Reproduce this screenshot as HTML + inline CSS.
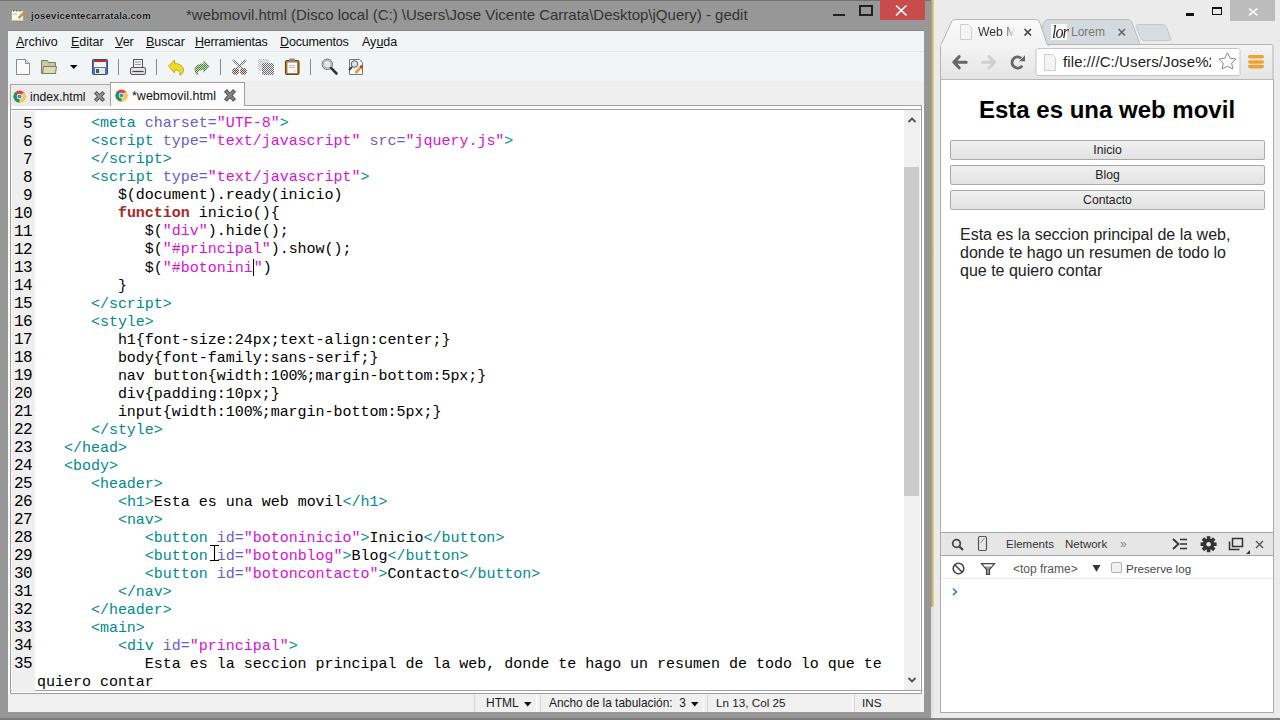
<!DOCTYPE html>
<html><head><meta charset="utf-8">
<style>
*{margin:0;padding:0;box-sizing:border-box}
html,body{width:1280px;height:720px;overflow:hidden;background:#858585;font-family:"Liberation Sans",sans-serif}
.a{position:absolute}
svg{position:absolute;overflow:visible}
#gedit{left:0;top:0;width:932px;height:718px;background:#979797}
#menubar{left:8px;top:31px;width:916px;height:21px;background:#f2f5f5;border-bottom:1px solid #e3e7e7;font-size:12.5px;color:#111}
#menubar span{position:absolute;top:4px}
#toolbar{left:8px;top:52px;width:916px;height:29px;background:#f2f5f5}
#tabbar{left:8px;top:81px;width:916px;height:25px;background:#efefef}
#page{left:8px;top:105px;width:916px;height:589px;background:#fff}
#pageb{left:10px;top:105px;width:912px;height:589px;border:1px solid #a0a0a0}
#editor{left:10px;top:109px;width:912px;height:582px;background:#fff;border:1px solid #a0a0a0}
#gutter{left:1px;top:1px;width:23px;height:581px;background:#efefef}
#code{left:26px;top:5px;font-family:"Liberation Mono",monospace;font-size:15px;letter-spacing:-0.015px;line-height:18px;color:#000;white-space:pre}
.ln{position:absolute;left:-1px;width:22px;text-align:right;font-family:"Liberation Mono",monospace;font-size:16px;letter-spacing:-0.6px;line-height:18px;color:#000}
.t{color:#008a8c}.at{color:#6a5acd}.s{color:#d810d8}.k{color:#a52a2a;font-weight:bold}
.cur{display:inline-block;width:0;height:17px;border-left:1px solid #000;vertical-align:-4.5px;margin-right:0}
#status{left:8px;top:694px;width:916px;height:18px;background:#f0f0f0;font-size:11.7px;color:#1a1a1a}
#status .seg{position:absolute;top:1px;height:17px;border-left:1px solid #d6d6d6;border-right:1px solid #fbfbfb}
#chrome{left:934px;top:0;width:346px;height:718px;background:#ebebeb}
.btn{width:315px;height:20px;background:linear-gradient(#f0f0f0,#e2e2e2);border:1px solid #a9a9a9;border-radius:2px;text-align:center;font-size:12.2px;line-height:18px;color:#222}
</style></head><body>
<div id="gedit" class="a">
  <div class="a" style="left:0;top:0;width:932px;height:1px;background:#727272"></div><div class="a" style="left:8px;top:30px;width:916px;height:1px;background:#878787"></div>
  <!-- title -->
  <svg style="left:0;top:0" width="30" height="30" viewBox="0 0 30 30">
    <rect x="11.5" y="10.5" width="12" height="10.5" fill="#fbfaf4" stroke="#8a8070" stroke-width="0.6"/>
    <rect x="11.5" y="19.8" width="12" height="1.2" fill="#d8c8a0"/>
    <path d="M13 11h1.2M16.3 11h1.2M19.6 11h1.2" stroke="#333" stroke-width="1.2"/>
    <path d="M13.2 14h4" stroke="#aaa" stroke-width="1"/>
    <path d="M18.6 18.2l6.6-6.6" stroke="#d08a3a" stroke-width="2.4"/>
  </svg>
  <div class="a" style="left:31px;top:9.5px;font-size:9.6px;color:#111;font-weight:bold;letter-spacing:0.22px;text-shadow:0 0 1.5px rgba(255,255,255,.8)">josevicentecarratala.com</div>
  <div class="a" style="left:186px;top:6px;font-size:15px;color:#333">*webmovil.html (Disco local (C:) \Users\Jose Vicente Carrata\Desktop\jQuery) - gedit</div>
  <div class="a" style="left:833px;top:13.5px;width:12px;height:2.2px;background:#222"></div>
  <div class="a" style="left:859px;top:5px;width:14px;height:11px;border:2px solid #222"></div>
  <div class="a" style="left:880px;top:0;width:45px;height:20px;background:#c74c4b"></div>
  <svg style="left:895px;top:5px" width="13" height="11" viewBox="0 0 13 11"><path d="M1 .5L11.5 10.3M11.5 .5L1 10.3" stroke="#fff" stroke-width="1.6"/></svg>

  <div id="menubar" class="a">
    <span style="left:8px"><u>A</u>rchivo</span>
    <span style="left:63px"><u>E</u>ditar</span>
    <span style="left:107px"><u>V</u>er</span>
    <span style="left:138px"><u>B</u>uscar</span>
    <span style="left:187px;letter-spacing:-0.2px"><u>H</u>erramientas</span>
    <span style="left:272px;letter-spacing:-0.15px"><u>D</u>ocumentos</span>
    <span style="left:354px">Ay<u>u</u>da</span>
  </div>
  <div id="toolbar" class="a"></div>
  <!-- toolbar icons (absolute to page) -->
  <svg style="left:0;top:0" width="400" height="90" viewBox="0 0 400 90">
    <!-- new -->
    <path d="M16.5 59.5h9l4 4v11h-13z" fill="#fafafa" stroke="#8a8a8a"/>
    <path d="M25.5 59.5v4h4" fill="#e0e0e0" stroke="#8a8a8a"/>
    <!-- open folder -->
    <path d="M41.5 73.5v-13h6l1 2h7v11z" fill="#c6c8a4" stroke="#7c7e60"/>
    <path d="M42.5 73.5l1-7h13l-1 7z" fill="#dadcb8" stroke="#7c7e60"/>
    <!-- dropdown -->
    <path d="M70 65h7.5l-3.75 4z" fill="#000"/>
    <!-- save -->
    <rect x="92.5" y="59.5" width="15" height="15" rx="1" fill="#4f78b8" stroke="#2c4c88"/>
    <rect x="94" y="60" width="12" height="2" fill="#d42020"/>
    <rect x="94" y="62" width="12" height="5" fill="#f4f4f4"/>
    <rect x="95" y="68" width="10" height="6" fill="#e6e6e6"/>
    <rect x="96" y="69" width="3" height="4" fill="#555"/>
    <!-- separators -->
    <rect x="118" y="59" width="1" height="16" fill="#8a8a8a"/>
    <rect x="156" y="59" width="1" height="16" fill="#8a8a8a"/>
    <rect x="220" y="59" width="1" height="16" fill="#8a8a8a"/>
    <rect x="310" y="59" width="1" height="16" fill="#8a8a8a"/>
    <!-- print -->
    <rect x="133.5" y="59.5" width="9" height="8" fill="#f4f4f4" stroke="#555"/>
    <path d="M135 62h6M135 64.5h6" stroke="#999"/>
    <rect x="130.5" y="67.5" width="15" height="7" rx="1.5" fill="#e4e4e4" stroke="#555"/>
    <path d="M132.5 71.5h11" stroke="#444" stroke-width="1.2"/>
    <!-- undo -->
    <path d="M168.5 66l6-6v3.5c5 0 9 2.5 9 6.5 0 3-2 5-4 5 1-2 1-5-5-5v3z" fill="#f0da28" stroke="#b8a010" stroke-width="0.9"/>
    <!-- redo -->
    <defs>
      <pattern id="dg" width="2" height="2" patternUnits="userSpaceOnUse"><rect width="2" height="2" fill="#c4dcb4"/><rect width="1" height="1" fill="#5a7a4a"/><rect x="1" y="1" width="1" height="1" fill="#5a7a4a"/></pattern>
      <pattern id="dc" width="2" height="2" patternUnits="userSpaceOnUse"><rect width="2" height="2" fill="#e8e0d0"/><rect width="1" height="1" fill="#5a4a3a"/><rect x="1" y="1" width="1" height="1" fill="#5a4a3a"/></pattern>
      <pattern id="dk" width="2" height="2" patternUnits="userSpaceOnUse"><rect width="2" height="2" fill="#f0f0f0"/><rect width="1" height="1" fill="#666"/><rect x="1" y="1" width="1" height="1" fill="#666"/></pattern>
      <pattern id="dl" width="2" height="2" patternUnits="userSpaceOnUse"><rect width="2" height="2" fill="#f4f4f4"/><rect width="1" height="1" fill="#bbb"/><rect x="1" y="1" width="1" height="1" fill="#bbb"/></pattern>
    </defs>
    <path d="M209.5 66l-6-6v3.5c-5 0-9 2.5-9 6.5 0 3 2 5 4 5-1-2-1-5 5-5v3z" fill="url(#dg)"/>
    <!-- cut -->
    <path d="M233 60l11 10M246 60l-11 10" stroke="url(#dk)" stroke-width="2.2"/>
    <circle cx="235.5" cy="71.3" r="3.4" fill="url(#dc)"/>
    <circle cx="243.5" cy="71.3" r="3.4" fill="url(#dc)"/>
    <!-- copy -->
    <rect x="258" y="59" width="11" height="12" rx="1" fill="url(#dl)"/>
    <rect x="262" y="63" width="12" height="12" rx="2" fill="url(#dk)"/>
    <!-- paste -->
    <rect x="285.5" y="60.5" width="13.5" height="14" rx="1.5" fill="#a8843a" stroke="#6a4a14" stroke-width="1.2"/>
    <rect x="287.5" y="62.5" width="9.5" height="10.5" fill="#fbfbfb"/>
    <path d="M294 73v-3.5h3z" fill="#ddd"/>
    <rect x="289" y="58.5" width="6" height="3" rx="1" fill="#888"/>
    <path d="M289 65.5h6M289 67.5h6" stroke="#bbb"/>
    <!-- find -->
    <circle cx="327.3" cy="64.3" r="5.2" fill="#e2e6ea" stroke="#666" stroke-width="1"/>
    <circle cx="327.3" cy="64.3" r="3.9" fill="none" stroke="#999" stroke-width="0.8"/>
    <path d="M331.2 68.2l5.3 5.3" stroke="#333" stroke-width="2.6" stroke-linecap="round"/>
    <!-- replace -->
    <path d="M349.5 59.5h10l3 3v12h-13z" fill="#fafafa" stroke="#777"/>
    <circle cx="354.5" cy="64" r="3.3" fill="#dde2e6" stroke="#555"/>
    <path d="M352 67l-3 3" stroke="#333" stroke-width="1.8"/>
    <path d="M355.5 73l6-6.5" stroke="#d8a040" stroke-width="2.6"/>
    <path d="M360.5 67.5l1.5-1.5" stroke="#c02020" stroke-width="2.6"/>
  </svg>

  <div id="tabbar" class="a"></div>
  <div id="page" class="a"></div><div id="pageb" class="a"></div>
  <div class="a" style="left:10px;top:84px;width:101px;height:22px;background:#ebebeb;border:1px solid #a8a8a8;border-bottom:none"></div>
  <div class="a" style="left:30px;top:90px;font-size:12.2px;color:#111">index.html</div>
  <div class="a" style="left:110px;top:82px;width:135px;height:24px;background:#fbfbfb;border:1px solid #a0a0a0;border-bottom:none"></div>
  <div class="a" style="left:132px;top:89px;font-size:12.5px;color:#111">*webmovil.html</div>
  <!-- chrome favicons -->
  <svg style="left:13px;top:90px" width="13" height="13" viewBox="0 0 24 24">
    <circle cx="12" cy="12" r="11" fill="#db4437"/>
    <path d="M12 12L2.5 17.5A11 11 0 0 0 12 23z" fill="#0f9d58"/><path d="M12 12L12 23A11 11 0 0 0 21.5 17.5z" fill="#ffcd40"/>
    <path d="M12 12L2.5 17.5A11 11 0 0 1 1 12 11 11 0 0 1 4.2 4.3z" fill="#0f9d58"/>
    <path d="M12 12L21.5 17.5A11 11 0 0 0 23 12 11 11 0 0 0 19.8 4.3z" fill="#ffcd40"/>
    <circle cx="12" cy="12" r="5" fill="#fff"/><circle cx="12" cy="12" r="3.8" fill="#4285f4"/>
  </svg>
  <svg style="left:115px;top:89px" width="13" height="13" viewBox="0 0 24 24">
    <circle cx="12" cy="12" r="11" fill="#db4437"/>
    <path d="M12 12L2.5 17.5A11 11 0 0 0 12 23z" fill="#0f9d58"/><path d="M12 12L12 23A11 11 0 0 0 21.5 17.5z" fill="#ffcd40"/>
    <path d="M12 12L2.5 17.5A11 11 0 0 1 1 12 11 11 0 0 1 4.2 4.3z" fill="#0f9d58"/>
    <path d="M12 12L21.5 17.5A11 11 0 0 0 23 12 11 11 0 0 0 19.8 4.3z" fill="#ffcd40"/>
    <circle cx="12" cy="12" r="5" fill="#fff"/><circle cx="12" cy="12" r="3.8" fill="#4285f4"/>
  </svg>
  <svg style="left:95px;top:92px" width="9" height="9" viewBox="0 0 9 9"><path d="M1.6 1.6l5.8 5.8M7.4 1.6l-5.8 5.8" stroke="#5a5a5a" stroke-width="3.8" stroke-linecap="square"/><path d="M1.6 1.6l5.8 5.8M7.4 1.6l-5.8 5.8" stroke="#9a9a9a" stroke-width="1.6" stroke-linecap="square"/></svg>
  <svg style="left:225px;top:90px" width="10" height="11" viewBox="0 0 10 11"><path d="M1.8 1.8l6.4 7.2M8.2 1.8l-6.4 7.2" stroke="#555" stroke-width="4" stroke-linecap="square"/><path d="M1.8 1.8l6.4 7.2M8.2 1.8l-6.4 7.2" stroke="#8a8a8a" stroke-width="1.8" stroke-linecap="square"/></svg>

  <div id="editor" class="a">
    <div id="gutter" class="a"></div>
    <div id="lns" class="a" style="left:0;top:5px"><div class="ln" style="top:0px">5</div><div class="ln" style="top:18px">6</div><div class="ln" style="top:36px">7</div><div class="ln" style="top:54px">8</div><div class="ln" style="top:72px">9</div><div class="ln" style="top:90px">10</div><div class="ln" style="top:108px">11</div><div class="ln" style="top:126px">12</div><div class="ln" style="top:144px">13</div><div class="ln" style="top:162px">14</div><div class="ln" style="top:180px">15</div><div class="ln" style="top:198px">16</div><div class="ln" style="top:216px">17</div><div class="ln" style="top:234px">18</div><div class="ln" style="top:252px">19</div><div class="ln" style="top:270px">20</div><div class="ln" style="top:288px">21</div><div class="ln" style="top:306px">22</div><div class="ln" style="top:324px">23</div><div class="ln" style="top:342px">24</div><div class="ln" style="top:360px">25</div><div class="ln" style="top:378px">26</div><div class="ln" style="top:396px">27</div><div class="ln" style="top:414px">28</div><div class="ln" style="top:432px">29</div><div class="ln" style="top:450px">30</div><div class="ln" style="top:468px">31</div><div class="ln" style="top:486px">32</div><div class="ln" style="top:504px">33</div><div class="ln" style="top:522px">34</div><div class="ln" style="top:540px">35</div></div>
    <div id="code" class="a">      <span class="t">&lt;meta</span> <span class="at">charset=</span><span class="s">"UTF-8"</span><span class="t">&gt;</span>
      <span class="t">&lt;script</span> <span class="at">type=</span><span class="s">"text/javascript"</span> <span class="at">src=</span><span class="s">"jquery.js"</span><span class="t">&gt;</span>
      <span class="t">&lt;/script</span><span class="t">&gt;</span>
      <span class="t">&lt;script</span> <span class="at">type=</span><span class="s">"text/javascript"</span><span class="t">&gt;</span>
         $(document).ready(inicio)
         <span class="k">function</span> inicio(){
            $(<span class="s">"div"</span>).hide();
            $(<span class="s">"#principal"</span>).show();
            $(<span class="s">"#botonini<span class="cur"></span>"</span>)
         }
      <span class="t">&lt;/script</span><span class="t">&gt;</span>
      <span class="t">&lt;style</span><span class="t">&gt;</span>
         h1{font-size:24px;text-align:center;}
         body{font-family:sans-serif;}
         nav button{width:100%;margin-bottom:5px;}
         div{padding:10px;}
         input{width:100%;margin-bottom:5px;}
      <span class="t">&lt;/style</span><span class="t">&gt;</span>
   <span class="t">&lt;/head</span><span class="t">&gt;</span>
   <span class="t">&lt;body</span><span class="t">&gt;</span>
      <span class="t">&lt;header</span><span class="t">&gt;</span>
         <span class="t">&lt;h1</span><span class="t">&gt;</span>Esta es una web movil<span class="t">&lt;/h1</span><span class="t">&gt;</span>
         <span class="t">&lt;nav</span><span class="t">&gt;</span>
            <span class="t">&lt;button</span> <span class="at">id=</span><span class="s">"botoninicio"</span><span class="t">&gt;</span>Inicio<span class="t">&lt;/button</span><span class="t">&gt;</span>
            <span class="t">&lt;button</span> <span class="at">id=</span><span class="s">"botonblog"</span><span class="t">&gt;</span>Blog<span class="t">&lt;/button</span><span class="t">&gt;</span>
            <span class="t">&lt;button</span> <span class="at">id=</span><span class="s">"botoncontacto"</span><span class="t">&gt;</span>Contacto<span class="t">&lt;/button</span><span class="t">&gt;</span>
         <span class="t">&lt;/nav</span><span class="t">&gt;</span>
      <span class="t">&lt;/header</span><span class="t">&gt;</span>
      <span class="t">&lt;main</span><span class="t">&gt;</span>
         <span class="t">&lt;div</span> <span class="at">id=</span><span class="s">"principal"</span><span class="t">&gt;</span>
            Esta es la seccion principal de la web, donde te hago un resumen de todo lo que te
quiero contar</div>
    <!-- scrollbar -->
    <div class="a" style="left:893px;top:0;width:16px;height:580px;background:#f0f0f0"></div>
    <div class="a" style="left:893px;top:57px;width:15px;height:329px;background:#cbcbcb"></div>
    <svg style="left:896px;top:7px" width="10" height="6" viewBox="0 0 10 6"><path d="M1.5 5L5 1.5 8.5 5" fill="none" stroke="#505050" stroke-width="1.8"/></svg>
    <svg style="left:896px;top:567px" width="10" height="6" viewBox="0 0 10 6"><path d="M1.5 1L5 4.5 8.5 1" fill="none" stroke="#505050" stroke-width="1.8"/></svg>
  </div>
  <!-- mouse I-beam -->
  <svg style="left:0;top:0" width="230" height="570" viewBox="0 0 230 570"><path d="M210 545.5h9M214.5 545.5v15M210 560.5h9" fill="none" stroke="#000" stroke-width="1.1"/></svg>

  <div id="status" class="a">
    <div class="seg" style="left:466px;width:63px"></div>
    <div class="seg" style="left:532px;width:164px"></div>
    <div class="seg" style="left:699px;width:146px"></div>
    <div class="seg" style="left:846px;width:68px"></div>
    <div class="a" style="left:478px;top:2px;font-size:12px">HTML</div>
    <svg style="left:516px;top:8px" width="8" height="5" viewBox="0 0 8 5"><path d="M0 0h7.5L3.75 4.5z" fill="#111"/></svg>
    <div class="a" style="left:541px;top:2px;font-size:11.9px">Ancho de la tabulación:&nbsp; 3</div>
    <svg style="left:683px;top:8px" width="8" height="5" viewBox="0 0 8 5"><path d="M0 0h7.5L3.75 4.5z" fill="#111"/></svg>
    <div class="a" style="left:708px;top:2px">Ln 13, Col 25</div>
    <div class="a" style="left:854px;top:2px">INS</div>
  </div>
  <div class="a" style="left:0;top:718px;width:932px;height:2px;background:#7c7c7c"></div>
</div>
<div class="a" style="left:931px;top:0;width:3px;height:718px;background:#e4e4e4"></div><div class="a" style="left:931px;top:0;width:3px;height:607px;background:linear-gradient(90deg,#b09a58,#e2d49a)"></div>
<div id="chrome" class="a">
  <!-- window buttons -->
  <div class="a" style="left:252px;top:12.5px;width:8px;height:3px;background:#111"></div>
  <div class="a" style="left:278px;top:7px;width:10px;height:8px;border:1.4px solid #111;border-top-width:2px"></div>
  <div class="a" style="left:296px;top:0;width:45px;height:21px;background:#bcbcbc"></div>
  <svg style="left:314px;top:8px" width="10" height="8" viewBox="0 0 10 8"><path d="M1 .5l8.4 6.8M9.4 .5L1 7.3" stroke="#fff" stroke-width="1.5"/></svg>
  <!-- tabs -->
  <svg style="left:0;top:0" width="346" height="90" viewBox="934 0 346 90">
    <defs>
      <linearGradient id="tg" x1="0" y1="0" x2="0" y2="1"><stop offset="0" stop-color="#fbfbfb"/><stop offset="1" stop-color="#f2f2f2"/></linearGradient>
      <linearGradient id="bg2" x1="0" y1="0" x2="0" y2="1"><stop offset="0" stop-color="#f4f4f4"/><stop offset="1" stop-color="#e4e4e4"/></linearGradient>
    </defs>
    <!-- new tab button -->
    <path d="M1138.5 24.5h24c2 0 3 1 4 3l4 10c1 2 0 3-2 3h-24c-2 0-3-1-4-3l-4-10c-1-2 0-3 2-3z" fill="#d7dce1" stroke="#c4c8cc"/>
    <!-- inactive tab -->
    <path d="M1036 44.5l8-22c1-2 2-3 4-3h80c2 0 3 1 4 3l8 22z" fill="#d5dadf" stroke="#b9bdc2"/>
    <!-- toolbar -->
    <path d="M940.5 80V48c0-2 1-3.5 3-3.5h328c1 0 1.5 .5 1.5 1.5V80" fill="url(#bg2)" stroke="#b5b5b5"/>
    <!-- active tab -->
    <path d="M940.5 46l11-24c1-2 2-2.5 4-2.5h80c2 0 3 .5 4 2.5l8 23h2" fill="url(#tg)" stroke="#b5b5b5"/>
    <rect x="941" y="44" width="106" height="3" fill="#f3f3f3"/>
    <!-- doc icon in tab -->
    <path d="M960.5 24.5h8l3 3v12h-11z" fill="#f4f4f4" stroke="#cfcfcf"/>
    <path d="M1036 50.5c0-1 1-2 2-2h200c1 0 2 1 2 2v23c0 1-1 2-2 2h-200c-1 0-2-1-2-2z" fill="#fff" stroke="#c4c4c4"/>
    <path d="M1044.5 54.5h8l3 3v13h-11z" fill="#f4f4f4" stroke="#cfcfcf"/>
    <!-- close x tabs -->
    <path d="M1024.5 29l6.5 6.5M1031 29l-6.5 6.5" stroke="#444" stroke-width="1.7"/>
    <path d="M1118.5 29l6.5 6.5M1125 29l-6.5 6.5" stroke="#6a6a6a" stroke-width="1.7"/>
    <!-- lor favicon -->
    <rect x="1051" y="24" width="16" height="16" fill="#fff"/>
    <!-- back / fwd / reload -->
    <path d="M954 62.2h12.2M953.8 62.2l5.4-5.6M953.8 62.2l5.4 5.6" stroke="#666" stroke-width="3" stroke-linecap="round" stroke-linejoin="round" fill="none"/>
    <path d="M982.6 62.2h12M994.6 62.2l-5.4-5.6M994.6 62.2l-5.4 5.6" stroke="#d0d0d0" stroke-width="3" stroke-linecap="round" stroke-linejoin="round" fill="none"/>
    <path d="M1022.2 65.7A5.6 5.6 0 1 1 1021.2 58.2" stroke="#666" stroke-width="2.8" fill="none"/>
    <path d="M1019 61.2h6v-6z" fill="#666"/>
    <!-- star -->
    <path d="M1227.5 52.8l2.6 5.4 5.9.8-4.3 4.1 1.1 5.9-5.3-2.8-5.3 2.8 1.1-5.9-4.3-4.1 5.9-.8z" fill="#fff" stroke="#8a8a8a" stroke-width="1"/>
    <!-- menu -->
    <rect x="1248" y="55" width="16" height="3.6" rx="1.8" fill="#eea232"/>
    <rect x="1248" y="60.2" width="16" height="3.6" rx="1.8" fill="#eea232"/>
    <rect x="1248" y="64.8" width="16" height="3.6" rx="1.8" fill="#eea232"/>
  </svg>
  <div class="a" style="left:44px;top:25px;font-size:12.2px;color:#333;width:37px;overflow:hidden;white-space:nowrap;-webkit-mask-image:linear-gradient(90deg,#000 70%,transparent)">Web Movil</div>
  <div class="a" style="left:118px;top:20.5px;font-family:'Liberation Serif',serif;font-style:italic;font-size:19px;color:#2a2a2a;letter-spacing:-1.2px;transform:scaleX(0.85);transform-origin:0 0">lor</div>
  <div class="a" style="left:137px;top:25px;font-size:12px;color:#777">Lorem</div>
  <div class="a" style="left:129px;top:53px;font-size:15px;letter-spacing:0.1px;color:#222;width:148px;overflow:hidden;white-space:nowrap">file:///C:/Users/Jose%20Vicente</div>
  <!-- page -->
  <div class="a" style="left:6px;top:79px;width:334px;height:634px;background:#fff;border:1px solid #ababab;border-top-color:#b8b8b8"></div>
  <div class="a" style="left:7px;top:96px;width:332px;text-align:center;font-size:24px;font-weight:bold;color:#000">Esta es una web movil</div>
  <div class="a btn" style="left:16px;top:140px">Inicio</div>
  <div class="a btn" style="left:16px;top:165px">Blog</div>
  <div class="a btn" style="left:16px;top:190px">Contacto</div>
  <div class="a" style="left:26px;top:226px;width:310px;font-size:16px;line-height:18px;color:#222;white-space:nowrap">Esta es la seccion principal de la web,<br>donde te hago un resumen de todo lo<br>que te quiero contar</div>
  <!-- devtools -->
  <div class="a" style="left:7px;top:532px;width:332px;height:24px;background:#e6e6e6;border-top:1px solid #a6a6a6;border-bottom:1px solid #a6a6a6"></div>
  <div class="a" style="left:7px;top:578px;width:332px;height:1px;background:#eaeaea"></div>
  <div class="a" style="left:72px;top:538px;font-size:11.5px;color:#333">Elements</div>
  <div class="a" style="left:131px;top:538px;font-size:11.5px;color:#333">Network</div>
  <div class="a" style="left:186px;top:537px;font-size:12px;color:#888">&raquo;</div>
  <div class="a" style="left:79px;top:562px;font-size:12px;color:#555">&lt;top frame&gt;</div>
  <div class="a" style="left:192px;top:562px;font-size:11.6px;color:#444">Preserve log</div>
  <svg style="left:0;top:0" width="346" height="720" viewBox="934 0 346 720">
    <!-- search -->
    <circle cx="956.5" cy="543.5" r="3.8" fill="none" stroke="#444" stroke-width="1.8"/>
    <path d="M959.5 546.5l3.5 3.5" stroke="#444" stroke-width="2.2"/>
    <!-- phone -->
    <rect x="978.5" y="536.5" width="8" height="14" rx="1.2" fill="none" stroke="#555" stroke-width="1.2"/>
    <path d="M980.5 543l4-5" stroke="#777" stroke-width="0.8"/>
    <!-- console drawer -->
    <path d="M1173 539l5.5 5-5.5 5" fill="none" stroke="#333" stroke-width="1.8"/>
    <path d="M1180 539.5h7M1180 544h7M1180 548.5h7" stroke="#333" stroke-width="1.5"/>
    <!-- gear -->
    <g transform="translate(1208.6,544.2)">
      <circle r="5.8" fill="#333"/>
      <g fill="#333">
        <rect x="-1.8" y="-8" width="3.6" height="16"/>
        <rect x="-1.8" y="-8" width="3.6" height="16" transform="rotate(45)"/>
        <rect x="-1.8" y="-8" width="3.6" height="16" transform="rotate(90)"/>
        <rect x="-1.8" y="-8" width="3.6" height="16" transform="rotate(135)"/>
      </g>
      <circle r="2.3" fill="#e6e6e6"/>
    </g>
    <!-- undock -->
    <rect x="1232.5" y="538.5" width="10" height="8" fill="none" stroke="#333" stroke-width="1.5"/>
    <path d="M1229.5 541.5v8h10" fill="none" stroke="#333" stroke-width="1.5"/>
    <path d="M1250 550v4h-4z" fill="#333"/>
    <!-- close -->
    <path d="M1256 541l7 7M1263 541l-7 7" stroke="#555" stroke-width="1.4"/>
    <!-- block -->
    <circle cx="958.5" cy="568.5" r="5.3" fill="none" stroke="#444" stroke-width="1.6"/>
    <path d="M955 565l7 7" stroke="#444" stroke-width="1.6"/>
    <!-- filter -->
    <path d="M981.5 563.5h13l-5 6v5h-3v-5z" fill="#999" stroke="#444" stroke-width="1.2"/>
    <path d="M983 564.5h10l-1.5 2h-7z" fill="#fff"/>
    <!-- dropdown -->
    <path d="M1092.5 565h8l-4 6.8z" fill="#333"/>
    <!-- checkbox -->
    <rect x="1111.5" y="562.5" width="10" height="10" rx="1.5" fill="#f2f2f2" stroke="#b0b0b0"/>
    <!-- prompt -->
    <path d="M953 588.5l3.5 3.3-3.5 3.3" fill="none" stroke="#3a7ad8" stroke-width="1.6"/>
  </svg>
</div>
</body></html>
